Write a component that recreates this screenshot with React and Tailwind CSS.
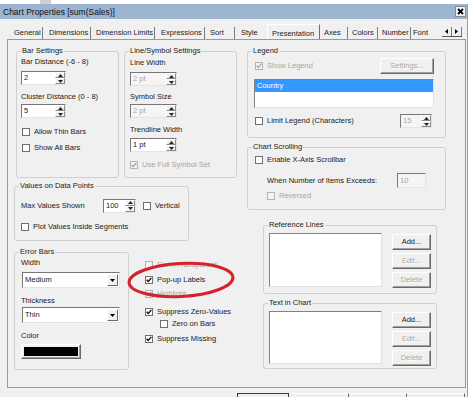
import React from 'react'

const TABS = [
  { label: 'General',          cls: 'ml-[9px] w-[34px] pl-[5px] border-r' },
  { label: 'Dimensions',       cls: 'w-[48px] pl-[6px] border-r' },
  { label: 'Dimension Limits', cls: 'w-[64px] pl-[5px] border-r' },
  { label: 'Expressions',      cls: 'w-[50px] pl-[6px] border-r' },
  { label: 'Sort',             cls: 'w-[30px] pl-[5px] border-r' },
  { label: 'Style',            cls: 'w-[32px] pl-[6px]' },
  { label: 'Presentation',     cls: 'w-[53px] pl-[4px]', active: true },
  { label: 'Axes',             cls: 'w-[28px] pl-[4px] border-r' },
  { label: 'Colors',           cls: 'w-[30px] pl-[4px] border-r' },
  { label: 'Number',           cls: 'w-[33px] pl-[4px] border-r' },
  { label: 'Font',             cls: 'w-[31px] pl-[2px]' },
]

function Group({ title, className = '', children }) {
  return (
    <fieldset className={`border border-[#cfcfcf] rounded-[3px] min-w-0 shrink-0 ${className}`}>
      <legend className="ml-[4px] px-[1px] leading-[10px]">{title}</legend>
      {children}
    </fieldset>
  )
}

function Check({ label, checked, disabled, className = '' }) {
  return (
    <div className={`flex items-center h-[10px] shrink-0 ${className}`}>
      <span className={`w-[8px] h-[8px] border shrink-0 flex items-center justify-center ${
        disabled ? 'border-[#b4b4b4] bg-[#f4f4f4]' : 'border-[#6f6f6f] bg-white'}`}>
        {checked && (
          <svg width="6" height="6" viewBox="0 0 6 6">
            <path d="M0.6 2.7 L2.3 4.5 L5.4 0.9" fill="none" stroke={disabled ? '#a9a9a9' : '#111'} strokeWidth="1.4" />
          </svg>
        )}
      </span>
      <span className={`ml-[4px] whitespace-nowrap ${disabled ? 'text-[#a6a6a6]' : ''}`}>{label}</span>
    </div>
  )
}

function Arrow({ up }) {
  return (
    <div className="flex-1 flex items-center justify-center bg-[#f0f0f0] border border-t-white border-l-white border-r-[#8a8a8a] border-b-[#8a8a8a]">
      <svg width="5" height="3" viewBox="0 0 5 3">
        <path d={up ? 'M2.5 0 L5 3 H0Z' : 'M0 0 H5 L2.5 3Z'} fill="#222" />
      </svg>
    </div>
  )
}

function Spin({ value, w, disabled }) {
  return (
    <div className={`flex h-[14px] border border-t-[#777] border-l-[#777] border-r-[#e4e4e4] border-b-[#e4e4e4] ${
      disabled ? 'bg-[#f5f5f5] text-[#a6a6a6]' : 'bg-white'} ${w}`}>
      <span className="flex-1 pl-[2px] leading-[12px]">{value}</span>
      <div className="w-[10px] flex flex-col">
        <Arrow up />
        <Arrow />
      </div>
    </div>
  )
}

function Select({ value, className = '' }) {
  return (
    <div className={`flex h-[16px] w-[98px] shrink-0 bg-white border border-t-[#777] border-l-[#777] border-r-[#e4e4e4] border-b-[#e4e4e4] ${className}`}>
      <span className="flex-1 pl-[2px] leading-[14px]">{value}</span>
      <div className="w-[11px] my-[1px] mr-[1px] bg-[#f0f0f0] border border-t-white border-l-white border-r-[#6a6a6a] border-b-[#6a6a6a] flex items-center justify-center">
        <svg width="5" height="3" viewBox="0 0 5 3"><path d="M0 0 H5 L2.5 3Z" fill="#000" /></svg>
      </div>
    </div>
  )
}

function Btn({ children, disabled, className = '' }) {
  return (
    <div className={`flex items-center justify-center shrink-0 bg-[#f0f0f0] border border-t-white border-l-white border-r-[#696969] border-b-[#696969] shadow-[inset_-1px_-1px_0_#a0a0a0] ${
      disabled ? 'text-[#a6a6a6] [text-shadow:1px_1px_0_#fff]' : ''} ${className}`}>
      {children}
    </div>
  )
}

function ListBox({ className = '', children }) {
  return (
    <div className={`bg-white shrink-0 border border-t-[#828282] border-l-[#828282] border-r-[#e2e2e2] border-b-[#e2e2e2] ${className}`}>
      {children}
    </div>
  )
}

function ButtonStack() {
  return (
    <div className="ml-[10px] mt-[1px] flex flex-col gap-[3px]">
      <Btn className="w-[39px] h-[16px]">Add...</Btn>
      <Btn disabled className="w-[39px] h-[16px]">Edit...</Btn>
      <Btn disabled className="w-[39px] h-[16px]">Delete</Btn>
    </div>
  )
}

export default function App() {
  return (
    <div className="relative w-[474px] h-[397px] overflow-hidden bg-white text-[#1a1a1a] text-[7.5px] leading-[10px] font-['Liberation_Sans',Arial,sans-serif]">
      {/* strip above the dialog */}
      <div className="h-[4px] flex">
        <span className="ml-[40px] w-[11px] h-[4px] bg-[#cfcfcf]" />
      </div>

      <div className="w-[468px] h-[393px] bg-[#f0f0f0] border-r border-[#9c9c9c] flex flex-col overflow-hidden">
        {/* title bar */}
        <div className="h-[15px] shrink-0 bg-[#9db5d1] flex items-center justify-between pl-[3px] pr-[1px]">
          <span className="text-[8.5px] text-[#111]">Chart Properties [sum(Sales)]</span>
          <div className="w-[11px] h-[11px] bg-[#f4f4f4] border border-[#8a8a8a] flex items-center justify-center">
            <svg width="7" height="7" viewBox="0 0 7 7">
              <path d="M1 1 L6 6 M6 1 L1 6" stroke="#000" strokeWidth="1.8" />
            </svg>
          </div>
        </div>

        {/* tabs */}
        <div className="h-[20px] shrink-0 flex items-end relative z-10">
          <div className="flex items-end w-[441px] overflow-hidden h-[20px]">
            {TABS.map(t =>
              t.active ? (
                <div key={t.label}
                  className={`shrink-0 h-[16px] -mb-[1px] pt-[3px] leading-[12px] bg-[#f0f0f0] border-l border-t border-r border-l-white border-t-white border-r-[#6e6e6e] whitespace-nowrap ${t.cls}`}>
                  {t.label}
                </div>
              ) : (
                <div key={t.label}
                  className={`shrink-0 h-[12px] leading-[12px] border-[#7a7a7a] whitespace-nowrap overflow-hidden ${t.cls}`}>
                  {t.label}
                </div>
              )
            )}
          </div>
          <div className="flex mb-[2px] ml-[1px] border-b border-[#555]">
            <div className="w-[10px] h-[9px] flex items-center justify-center border-r border-[#777]">
              <svg width="3" height="5" viewBox="0 0 3 5"><path d="M3 0 V5 L0 2.5Z" fill="#000" /></svg>
            </div>
            <div className="w-[10px] h-[9px] flex items-center justify-center border-r border-[#777]">
              <svg width="3" height="5" viewBox="0 0 3 5"><path d="M0 0 V5 L3 2.5Z" fill="#000" /></svg>
            </div>
          </div>
        </div>

        {/* tab page */}
        <div className="ml-[7px] w-[459px] h-[349px] shrink-0 border border-[#9a9a9a] flex pl-[6px] pt-[6px]">
          {/* left column */}
          <div className="w-[223px] flex flex-col">
            <div className="flex shrink-0">
              <Group title="Bar Settings" className="ml-[2px] w-[103px] h-[132px]">
                <div className="flex flex-col pl-[4px]">
                  <span className="mt-[1px]">Bar Distance (-6 - 8)</span>
                  <div className="mt-[4px]"><Spin value="2" w="w-[45px]" /></div>
                  <span className="mt-[7px]">Cluster Distance (0 - 8)</span>
                  <div className="mt-[2px]"><Spin value="5" w="w-[45px]" /></div>
                  <Check className="mt-[9px] ml-[1px]" label="Allow Thin Bars" />
                  <Check className="mt-[6px] ml-[1px]" label="Show All Bars" />
                </div>
              </Group>
              <Group title="Line/Symbol Settings" className="ml-[5px] w-[113px] h-[132px]">
                <div className="flex flex-col pl-[5px]">
                  <span className="mt-[2px]">Line Width</span>
                  <div className="mt-[4px]"><Spin value="2 pt" disabled w="w-[47px]" /></div>
                  <span className="mt-[6px]">Symbol Size</span>
                  <div className="mt-[2px]"><Spin value="2 pt" disabled w="w-[47px]" /></div>
                  <span className="mt-[7px]">Trendline Width</span>
                  <div className="mt-[3px]"><Spin value="1 pt" w="w-[47px]" /></div>
                  <Check className="mt-[8px]" checked disabled label="Use Full Symbol Set" />
                </div>
              </Group>
            </div>

            <Group title="Values on Data Points" className="w-[175px] h-[60px] mt-[3px]">
              <div className="flex items-center h-[15px] mt-[7px] pl-[6px]">
                <span className="w-[82px]">Max Values Shown</span>
                <Spin value="100" w="w-[33px]" />
                <Check className="ml-[7px]" label="Vertical" />
              </div>
              <Check className="mt-[9px] ml-[6px]" label="Plot Values Inside Segments" />
            </Group>

            <div className="flex shrink-0 mt-[6px]">
              <Group title="Error Bars" className="w-[115px] h-[123px]">
                <div className="flex flex-col pl-[6px]">
                  <span className="mt-[1px]">Width</span>
                  <Select value="Medium" className="mt-[4px] ml-[1px]" />
                  <span className="mt-[8px]">Thickness</span>
                  <Select value="Thin" className="mt-[1px] ml-[1px]" />
                  <span className="mt-[8px]">Color</span>
                  <div className="mt-[3px] w-[60px] h-[15px] shrink-0 p-[2px] bg-[#f0f0f0] border border-t-white border-l-white border-r-[#696969] border-b-[#696969] shadow-[inset_-1px_-1px_0_#a0a0a0]">
                    <div className="w-full h-full bg-black" />
                  </div>
                </div>
              </Group>
              <div className="ml-[16px] flex flex-col">
                <Check className="mt-[13px]" disabled label="Semi-Transparent" />
                <Check className="mt-[5px]" checked label="Pop-up Labels" />
                <Check className="mt-[4px]" checked disabled label="Highlight" />
                <Check className="mt-[8px]" checked label="Suppress Zero-Values" />
                <Check className="mt-[2px] ml-[15px]" label="Zero on Bars" />
                <Check className="mt-[5px]" checked label="Suppress Missing" />
              </div>
            </div>
          </div>

          {/* right column */}
          <div className="ml-[10px] w-[199px] flex flex-col">
            <Group title="Legend" className="w-[199px] h-[92px]">
              <div className="flex items-center justify-between h-[16px] mt-[2px] pl-[7px] pr-[11px]">
                <Check checked disabled label="Show Legend" />
                <Btn disabled className="w-[54px] h-[16px]">Settings...</Btn>
              </div>
              <ListBox className="mt-[5px] ml-[6px] w-[180px] h-[29px]">
                <div className="h-[12px] bg-[#3399ff] text-white pl-[2px] leading-[12px]">Country</div>
              </ListBox>
              <div className="flex items-center justify-between h-[14px] mt-[6px] pl-[7px] pr-[13px]">
                <Check label="Limit Legend (Characters)" />
                <Spin value="15" disabled w="w-[32px]" />
              </div>
            </Group>

            <Group title="Chart Scrolling" className="w-[199px] h-[68px] mt-[4px]">
              <Check className="mt-[3px] ml-[7px]" label="Enable X-Axis Scrollbar" />
              <div className="flex items-center h-[15px] mt-[8px] pl-[19px]">
                <span className="w-[130px] whitespace-nowrap">When Number of Items Exceeds:</span>
                <div className="w-[29px] h-[15px] pl-[2px] leading-[13px] bg-[#f5f5f5] text-[#a6a6a6] border border-t-[#777] border-l-[#777] border-r-[#e4e4e4] border-b-[#e4e4e4]">10</div>
              </div>
              <Check className="mt-[3px] ml-[19px]" disabled label="Reversed" />
            </Group>

            <Group title="Reference Lines" className="ml-[16px] w-[174px] h-[74px] mt-[10px]">
              <div className="flex mt-[3px] ml-[5px]">
                <ListBox className="w-[113px] h-[54px]" />
                <ButtonStack />
              </div>
            </Group>

            <Group title="Text in Chart" className="ml-[16px] w-[174px] h-[71px] mt-[4px]">
              <div className="flex mt-[3px] ml-[5px]">
                <ListBox className="w-[113px] h-[53px]" />
                <ButtonStack />
              </div>
            </Group>
          </div>
        </div>

        {/* dialog buttons, cut off at the bottom */}
        <div className="flex shrink-0 mt-[5px] ml-[237px]">
          <div className="w-[52px] h-[20px] border border-[#3a3a3a] bg-[#f0f0f0]" />
          <div className="ml-[1px] w-[59px] h-[20px] border-t border-r border-t-white border-r-[#6a6a6a]" />
          <div className="w-[58px] h-[20px] border-t border-r border-t-white border-r-[#6a6a6a]" />
          <div className="w-[58px] h-[20px] border-t border-r border-t-white border-r-[#6a6a6a]" />
        </div>
      </div>

      {/* red hand-drawn ellipse annotation */}
      <svg className="absolute left-[125px] top-[260px]" width="112" height="40" viewBox="0 0 112 40">
        <ellipse cx="56" cy="20" rx="52" ry="16.5" fill="none" stroke="#d3232b" strokeWidth="3" transform="rotate(-3 56 20)" />
      </svg>
    </div>
  )
}
